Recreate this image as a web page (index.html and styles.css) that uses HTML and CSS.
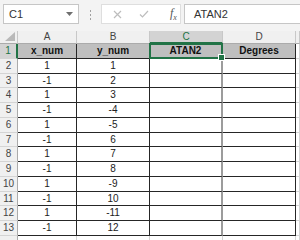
FILE: index.html
```html
<!DOCTYPE html>
<html lang="en">
<head>
    <meta charset="UTF-8">
    <title>ATAN2</title>
    <link rel="stylesheet" href="styles.css">
</head>
<body>
    <div class="formula-bar">
        <div class="name-box">
            <span>C1</span>
            <svg width="7" height="4" viewBox="0 0 7 4"><path d="M0 0H7L3.5 4Z" fill="#6f6f6f"/></svg>
        </div>
        <div class="grip"><i></i><i></i><i></i></div>
        <div class="fn-box">
            <svg class="fn-icon" width="9" height="9" viewBox="0 0 9 9"><path d="M1 1L8 8M8 1L1 8" stroke="#bdbdbd" stroke-width="1.2" fill="none"/></svg>
            <svg class="fn-icon" width="10" height="8" viewBox="0 0 10 8"><path d="M1 4.5L3.5 7L9 1" stroke="#bdbdbd" stroke-width="1.2" fill="none"/></svg>
            <span class="fx">f<sub>x</sub></span>
        </div>
        <div class="formula-input">ATAN2</div>
    </div>

    <div class="sheet">
        <!-- cabecera de columnas -->
        <div class="corner"><svg width="10" height="9" viewBox="0 0 10 9"><path d="M10 0V9H0Z" fill="#b9b9b9"/></svg></div>
        <div class="hd">A</div>
        <div class="hd">B</div>
        <div class="hd sel">C</div>
        <div class="hd">D</div>
        <div class="hd"></div>

        <div class="rh sel">1</div>
        <div class="t title">x_num</div>
        <div class="t title">y_num</div>
        <div class="t title cc active">ATAN2</div>
        <div class="t title">Degrees</div>
        <div class="g"></div>

        <div class="rh">2</div><div class="t">1</div><div class="t">1</div><div class="t cc"></div><div class="t"></div><div class="g"></div>
        <div class="rh">3</div><div class="t">-1</div><div class="t">2</div><div class="t cc"></div><div class="t"></div><div class="g"></div>
        <div class="rh">4</div><div class="t">1</div><div class="t">3</div><div class="t cc"></div><div class="t"></div><div class="g"></div>
        <div class="rh">5</div><div class="t">-1</div><div class="t">-4</div><div class="t cc"></div><div class="t"></div><div class="g"></div>
        <div class="rh">6</div><div class="t">1</div><div class="t">-5</div><div class="t cc"></div><div class="t"></div><div class="g"></div>
        <div class="rh">7</div><div class="t">-1</div><div class="t">6</div><div class="t cc"></div><div class="t"></div><div class="g"></div>
        <div class="rh">8</div><div class="t">1</div><div class="t">7</div><div class="t cc"></div><div class="t"></div><div class="g"></div>
        <div class="rh">9</div><div class="t">-1</div><div class="t">8</div><div class="t cc"></div><div class="t"></div><div class="g"></div>
        <div class="rh">10</div><div class="t">1</div><div class="t">-9</div><div class="t cc"></div><div class="t"></div><div class="g"></div>
        <div class="rh">11</div><div class="t">-1</div><div class="t">10</div><div class="t cc"></div><div class="t"></div><div class="g"></div>
        <div class="rh">12</div><div class="t">1</div><div class="t">-11</div><div class="t cc"></div><div class="t"></div><div class="g"></div>
        <div class="rh">13</div><div class="t">-1</div><div class="t">12</div><div class="t cc"></div><div class="t"></div><div class="g"></div>

        <div class="rh"></div><div class="g"></div><div class="g"></div><div class="g"></div><div class="g"></div><div class="g"></div>
    </div>
</body>
</html>
```

FILE: styles.css
```css
* {
    box-sizing: border-box;
}

body {
    margin: 0;
    width: 300px;
    height: 240px;
    overflow: hidden;
    background: #fff;
    font-family: "Liberation Sans", Arial, sans-serif;
    color: #222;
}

/* barra de fórmulas */
.formula-bar {
    height: 31px;
    background: #f3f3f3;
    display: flex;
    align-items: flex-start;
    padding: 4px 0 0 3px;
}

.name-box {
    width: 76px;
    height: 20px;
    background: #fff;
    border: 1px solid #c6c6c6;
    display: flex;
    align-items: center;
    justify-content: space-between;
    padding: 0 5px 0 5px;
    font-size: 11px;
    color: #333;
}

.grip {
    width: 22px;
    display: flex;
    flex-direction: column;
    align-items: center;
    gap: 2px;
    padding-top: 6px;
}

.grip i {
    width: 1px;
    height: 2px;
    background: #a0a0a0;
}

.fn-box {
    width: 80px;
    height: 20px;
    background: #fff;
    border: 1px solid #dedede;
    display: flex;
    align-items: center;
    padding-left: 11px;
}

.fn-icon {
    margin-right: 17px;
}

.fx {
    font-family: "Liberation Serif", serif;
    font-style: italic;
    font-size: 12px;
    color: #555;
    margin-left: 4px;
}

.fx sub {
    font-size: 8px;
}

.formula-input {
    flex: 1;
    height: 20px;
    margin-left: 3px;
    background: #fff;
    border: 1px solid #c6c6c6;
    border-right: none;
    padding-left: 9px;
    font-size: 11px;
    line-height: 18px;
    color: #333;
}

/* hoja */
.sheet {
    display: grid;
    grid-template-columns: 18px 59px 73px 73px 73px 4px;
    grid-template-rows: 13px repeat(14, 14.75px);
    font-size: 10px;
    overflow: hidden;
}

.corner {
    background: #f0f0f0;
    border-right: 1px solid #c8c8c8;
    border-bottom: 1px solid #ababab;
    display: flex;
    align-items: flex-end;
    justify-content: flex-end;
    padding: 0 2px 2px 0;
}

.hd {
    background: #f0f0f0;
    border-right: 1px solid #c8c8c8;
    border-bottom: 1px solid #ababab;
    color: #444;
    text-align: center;
    line-height: 12px;
}

.hd.sel {
    background: #d3d3d3;
    color: #217346;
    border-bottom: 2px solid #217346;
}

.rh {
    background: #f0f0f0;
    border-right: 1px solid #ababab;
    border-bottom: 1px solid #d4d4d4;
    color: #444;
    text-align: center;
    line-height: 14px;
}

.rh.sel {
    background: #d3d3d3;
    color: #217346;
    border-right: 2px solid #217346;
}

.t {
    border-right: 1px solid #262626;
    border-bottom: 1px solid #262626;
    text-align: center;
    line-height: 14px;
    color: #222;
}

.t.cc {
    border-right: 2px solid #9c9c9c;
}

.t.title {
    background: #bfbfbf;
    font-weight: bold;
    color: #111;
}

.active {
    position: relative;
}

.active::after {
    content: "";
    position: absolute;
    left: -1px;
    top: -1px;
    right: -2px;
    bottom: -1px;
    border: 2px solid #217346;
}

.active::before {
    content: "";
    position: absolute;
    right: -4px;
    bottom: -3px;
    width: 5px;
    height: 5px;
    background: #217346;
    border: 1px solid #fff;
    z-index: 1;
}

.g {
    border-right: 1px solid #d4d4d4;
    border-bottom: 1px solid #d4d4d4;
}
```
